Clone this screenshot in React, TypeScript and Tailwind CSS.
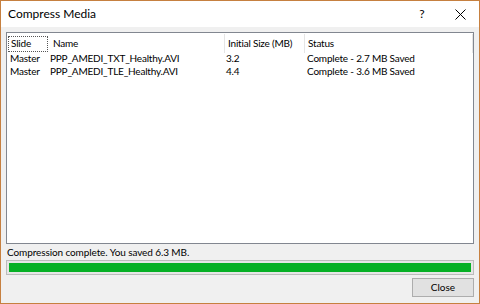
import React from 'react';

const rows = [
  { slide: 'Master', name: 'PPP_AMEDI_TXT_Healthy.AVI', size: '3.2', status: 'Complete - 2.7 MB Saved' },
  { slide: 'Master', name: 'PPP_AMEDI_TLE_Healthy.AVI', size: '4.4', status: 'Complete - 3.6 MB Saved' },
];

export default function App() {
  return (
    <div
      className="w-[480px] h-[304px] border border-[#c68040] bg-[#f0f0f0] flex flex-col text-[10px] text-black whitespace-nowrap"
      style={{ fontFamily: 'Lato, "Noto Sans", sans-serif' }}
    >
      {/* title bar */}
      <div className="h-[26px] bg-white flex items-center pl-[7px] shrink-0 text-[12px]">
        <span className="flex-1">Compress Media</span>
        <span className="w-[38px] text-center text-[12px]">?</span>
        <div className="w-[38px] flex justify-center">
          <svg width="11" height="11" viewBox="0 0 11 11" stroke="#000" strokeWidth="1">
            <path d="M0.5 0.5 L10.5 10.5 M10.5 0.5 L0.5 10.5" />
          </svg>
        </div>
      </div>

      <div className="flex flex-col px-[5px] pt-[5px] flex-1">
        {/* list view */}
        <div className="h-[212px] bg-white border border-[#828790] flex flex-col tracking-[-0.2px]">
          <div className="flex h-[19px] items-center mt-[1px]">
            <div className="w-[40px] ml-[1px] h-[16px] flex items-center border border-dotted border-[#555] pl-[2px]">Slide</div>
            <div className="w-[177px] h-full flex items-center pl-[5px] border-r border-[#e5e5e5]">Name</div>
            <div className="w-[80px] h-full flex items-center pl-[3px] border-r border-[#e5e5e5]">Initial Size (MB)</div>
            <div className="w-[168px] h-full flex items-center pl-[3px] border-r border-[#e5e5e5]">Status</div>
          </div>
          <div className="flex flex-col -mt-[1px]">
            {rows.map((r) => (
              <div key={r.name} className="flex h-[13px] items-center leading-[13px]">
                <div className="w-[42px] pl-[3px]">{r.slide}</div>
                <div className="w-[177px] pl-[1px]">{r.name}</div>
                <div className="w-[80px]">{r.size}</div>
                <div className="pl-[1px]">{r.status}</div>
              </div>
            ))}
          </div>
        </div>

        <div className="mt-[1px] h-[15px] flex items-center pl-[1px] tracking-[-0.1px]">
          Compression complete. You saved 6.3 MB.
        </div>

        {/* progress bar */}
        <div className="h-[15px] border border-[#bcbcbc] bg-[#e6e6e6] p-[2px]">
          <div className="h-full w-full bg-[#06b025]" />
        </div>

        <div className="flex justify-end mt-[3px]">
          <button className="w-[62px] h-[19px] bg-[#e1e1e1] border border-[#adadad] flex items-center justify-center">
            Close
          </button>
        </div>
      </div>
    </div>
  );
}
